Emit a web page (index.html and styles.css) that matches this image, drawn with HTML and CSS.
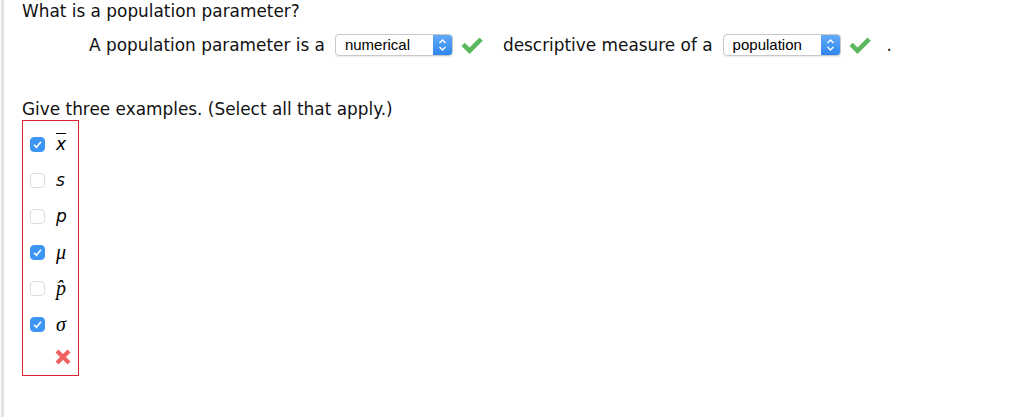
FILE: index.html
```html
<!DOCTYPE html>
<html>
<head>
<meta charset="utf-8">
<link rel="stylesheet" href="styles.css">
</head>
<body>
<div class="page">
  <div class="question">What is a population parameter?</div>
  <div class="sentence">
    <span>A population parameter is a</span>
    <span class="select"><span class="select-text">numerical</span><span class="select-arrow"><svg width="9" height="14" viewBox="0 0 9 14"><path d="M1.5 5 L4.5 2 L7.5 5 M1.5 9 L4.5 12 L7.5 9" fill="none" stroke="#fff" stroke-width="1.4"/></svg></span></span>
    <svg class="tick" width="24" height="20" viewBox="0 0 24 20"><path d="M1.5 11 L4.8 7.7 L9.5 12.4 L19.5 2.4 L22.8 5.7 L9.5 19 Z" fill="#5cb85c"/></svg>
    <span class="gap">descriptive measure of a</span>
    <span class="select"><span class="select-text">population</span><span class="select-arrow"><svg width="9" height="14" viewBox="0 0 9 14"><path d="M1.5 5 L4.5 2 L7.5 5 M1.5 9 L4.5 12 L7.5 9" fill="none" stroke="#fff" stroke-width="1.4"/></svg></span></span>
    <svg class="tick" width="24" height="20" viewBox="0 0 24 20"><path d="M1.5 11 L4.8 7.7 L9.5 12.4 L19.5 2.4 L22.8 5.7 L9.5 19 Z" fill="#5cb85c"/></svg>
    <span class="dot">.</span>
  </div>
  <div class="prompt">Give three examples. (Select all that apply.)</div>
  <div class="choices">
    <div class="row"><span class="cb checked"><svg width="15" height="15" viewBox="0 0 15 15"><path d="M4 7.8 L6.4 10.2 L11 4.8" fill="none" stroke="#fff" stroke-width="1.6"/></svg></span><span class="sym sans xbar">x</span></div>
    <div class="row"><span class="cb"></span><span class="sym sans">s</span></div>
    <div class="row"><span class="cb"></span><span class="sym sans">p</span></div>
    <div class="row"><span class="cb checked"><svg width="15" height="15" viewBox="0 0 15 15"><path d="M4 7.8 L6.4 10.2 L11 4.8" fill="none" stroke="#fff" stroke-width="1.6"/></svg></span><span class="sym serif">μ</span></div>
    <div class="row"><span class="cb"></span><span class="sym serif">p̂</span></div>
    <div class="row"><span class="cb checked"><svg width="15" height="15" viewBox="0 0 15 15"><path d="M4 7.8 L6.4 10.2 L11 4.8" fill="none" stroke="#fff" stroke-width="1.6"/></svg></span><span class="sym serif">σ</span></div>
    <div class="row wrong"><svg width="18" height="18" viewBox="0 0 18 18"><path d="M3 3 L15 15 M15 3 L3 15" stroke="#f06262" stroke-width="4.2" stroke-linecap="butt"/></svg></div>
  </div>
</div>
</body>
</html>
```

FILE: styles.css
```css
html, body {
  margin: 0;
  padding: 0;
  background: #fff;
}
body {
  font-family: "DejaVu Sans", Verdana, sans-serif;
  font-size: 16.9px;
  color: #111;
}
.page {
  margin-left: 1px;
  border-left: 3px solid #e2e2e2;
  height: 417px;
  box-sizing: border-box;
  padding-left: 18px;
}
.question {
  padding-top: 1px;
  line-height: 20px;
}
.sentence {
  display: flex;
  align-items: center;
  margin-top: 13px;
  padding-left: 67px;
  height: 22px;
}
.select {
  display: inline-flex;
  width: 118px;
  height: 22px;
  box-sizing: border-box;
  border: 1px solid #c8c8c8;
  border-radius: 4px;
  margin-left: 10px;
  overflow: hidden;
  font-family: "Liberation Sans", Arial, sans-serif;
  font-size: 15px;
  color: #000;
  box-shadow: 0 1px 1px rgba(0,0,0,0.08);
}
.select-text {
  flex: 1;
  padding-left: 9px;
  line-height: 20px;
}
.select-arrow {
  width: 19px;
  background: linear-gradient(#62aaf8, #2f86f0);
  display: flex;
  align-items: center;
  justify-content: center;
}
.tick {
  margin-left: 7px;
}
.gap {
  margin-left: 19px;
}
.dot {
  margin-left: 15px;
}
.prompt {
  margin-top: 43px;
  line-height: 20px;
}
.choices {
  margin-top: 1px;
  width: 57px;
  height: 256px;
  box-sizing: border-box;
  border: 1px solid #d9222e;
  padding-top: 5px;
  padding-left: 7px;
}
.row {
  display: flex;
  align-items: center;
  height: 36px;
}
.cb {
  width: 15px;
  height: 15px;
  box-sizing: border-box;
  border: 1px solid #dcdcdc;
  border-radius: 4px;
  background: #fff;
  display: inline-flex;
}
.cb.checked {
  background: #3d95f4;
  border-color: #3d95f4;
}
.cb.checked svg { margin: -1px; }
.sym {
  margin-left: 11px;
  font-style: italic;
  color: #000;
}
.sans {
  font-family: "DejaVu Sans", Verdana, sans-serif;
  font-size: 17px;
}
.serif {
  font-family: "Liberation Serif", "Times New Roman", serif;
  font-size: 20px;
}
.xbar {
  text-decoration: overline;
}
.wrong {
  padding-left: 24px;
  height: 30px;
}
```
